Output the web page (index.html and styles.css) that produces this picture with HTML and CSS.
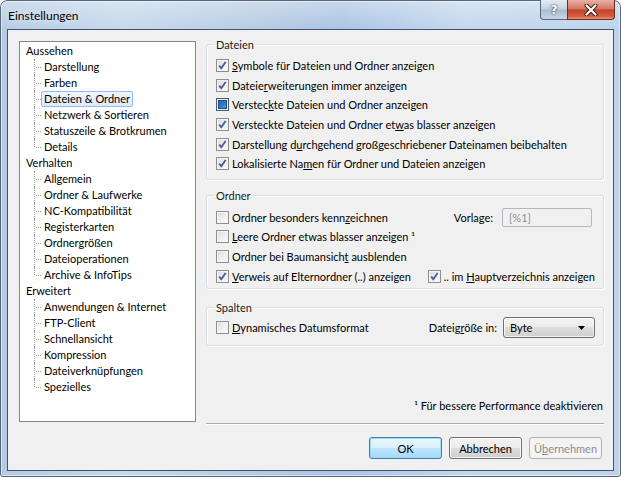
FILE: index.html
```html
<!DOCTYPE html>
<html>
<head>
  <title>Einstellungen</title>
  <link rel="stylesheet" href="styles.css">
</head>
<body>
  <div class="window">
    <div class="titlebar">
      <span class="title">Einstellungen</span>
      <div class="caption-buttons">
        <div class="cap help">?</div>
        <div class="cap close">
          <svg width="14" height="12" viewBox="0 0 14 12">
            <path d="M2.5 1.5 L11.5 10.5 M11.5 1.5 L2.5 10.5" stroke="#3a1a12" stroke-width="4" stroke-linecap="round"/>
            <path d="M2.5 1.5 L11.5 10.5 M11.5 1.5 L2.5 10.5" stroke="#fff" stroke-width="2.2" stroke-linecap="round"/>
          </svg>
        </div>
      </div>
    </div>

    <div class="client">
      <div class="main">
        <ul class="tree">
          <li><div class="node">Aussehen</div>
            <ul class="children">
              <li><span class="label">Darstellung</span></li>
              <li><span class="label">Farben</span></li>
              <li><span class="label selected">Dateien &amp; Ordner</span></li>
              <li><span class="label">Netzwerk &amp; Sortieren</span></li>
              <li><span class="label">Statuszeile &amp; Brotkrumen</span></li>
              <li><span class="label">Details</span></li>
            </ul>
          </li>
          <li><div class="node">Verhalten</div>
            <ul class="children">
              <li><span class="label">Allgemein</span></li>
              <li><span class="label">Ordner &amp; Laufwerke</span></li>
              <li><span class="label">NC-Kompatibilität</span></li>
              <li><span class="label">Registerkarten</span></li>
              <li><span class="label">Ordnergrößen</span></li>
              <li><span class="label">Dateioperationen</span></li>
              <li><span class="label">Archive &amp; InfoTips</span></li>
            </ul>
          </li>
          <li><div class="node">Erweitert</div>
            <ul class="children">
              <li><span class="label">Anwendungen &amp; Internet</span></li>
              <li><span class="label">FTP-Client</span></li>
              <li><span class="label">Schnellansicht</span></li>
              <li><span class="label">Kompression</span></li>
              <li><span class="label">Dateiverknüpfungen</span></li>
              <li><span class="label">Spezielles</span></li>
            </ul>
          </li>
        </ul>

        <div class="settings">
          <fieldset class="group group-files">
            <legend>Dateien</legend>
            <div class="row"><span class="cb checked"></span><span><u>S</u>ymbole für Dateien und Ordner anzeigen</span></div>
            <div class="row"><span class="cb checked"></span><span>Dateie<u>r</u>weiterungen immer anzeigen</span></div>
            <div class="row"><span class="cb mixed"></span><span>Verstec<u>k</u>te Dateien und Ordner anzeigen</span></div>
            <div class="row"><span class="cb checked"></span><span>Versteckte Dateien und Ordner et<u>w</u>as blasser anzeigen</span></div>
            <div class="row"><span class="cb checked"></span><span>Darstellung d<u>u</u>rchgehend großgeschriebener Dateinamen beibehalten</span></div>
            <div class="row"><span class="cb checked"></span><span>Lokalisierte Na<u>m</u>en für Ordner und Dateien anzeigen</span></div>
          </fieldset>

          <fieldset class="group group-folders">
            <legend>Ordner</legend>
            <div class="row">
              <span class="cb"></span><span>Ordner besonders kenn<u>z</u>eichnen</span>
              <span class="field"><span>Vorla<u>g</u>e:</span><span class="textbox">[%1]</span></span>
            </div>
            <div class="row"><span class="cb"></span><span><u>L</u>eere Ordner etwas blasser anzeigen ¹</span></div>
            <div class="row"><span class="cb"></span><span>Ordner bei Baumansich<u>t</u> ausblenden</span></div>
            <div class="row">
              <span class="cb checked"></span><span><u>V</u>erweis auf Elternordner (..) anzeigen</span>
              <span class="field"><span class="cb checked"></span><span>.. im <u>H</u>auptverzeichnis anzeigen</span></span>
            </div>
          </fieldset>

          <fieldset class="group group-columns">
            <legend>Spalten</legend>
            <div class="row">
              <span class="cb"></span><span><u>D</u>ynamisches Datumsformat</span>
              <span class="field"><span>Dateig<u>r</u>öße in:</span><span class="combo">Byte<svg width="7" height="4" viewBox="0 0 7 4"><path d="M0 0 H7 L3.5 4 Z" fill="#000"/></svg></span></span>
            </div>
          </fieldset>

          <p class="footnote">¹ Für bessere Performance deaktivieren</p>
        </div>
      </div>

      <div class="buttons">
        <button class="btn default">OK</button>
        <button class="btn">Abbrechen</button>
        <button class="btn" disabled>Ü<u>b</u>ernehmen</button>
      </div>
    </div>
  </div>
</body>
</html>
```

FILE: styles.css
```css
html, body {
  margin: 0;
  padding: 0;
}
body {
  font-family: Lato, "Open Sans", sans-serif;
  font-size: 11px;
  color: #000;
}
.window {
  width: 621px;
  height: 477px;
  box-sizing: border-box;
  padding: 0 7px 6px 7px;
  display: flex;
  flex-direction: column;
  border-radius: 7px 7px 3px 3px;
  background:
    linear-gradient(to bottom, rgba(255,255,255,0.35), rgba(255,255,255,0) 30px),
    linear-gradient(to right, #b5cbe3 0%, #c6d8ec 20%, #b3c9e1 45%, #a9c4e4 55%, #c4d7ec 75%, #bed3ea 100%);
  box-shadow: inset 0 0 0 1px #56677c, inset 0 0 0 2px rgba(255,255,255,0.5);
  overflow: hidden;
}

/* title bar */
.titlebar {
  height: 29px;
  display: flex;
  justify-content: space-between;
  align-items: flex-start;
}
.title {
  margin: 8px 0 0 1px;
  font-size: 12px;
  line-height: 15px;
  text-shadow: 0 0 6px rgba(255,255,255,0.9);
}
.caption-buttons {
  display: flex;
  margin-right: -1px;
}
.cap {
  height: 19px;
  display: flex;
  align-items: center;
  justify-content: center;
  border: 1px solid #56677c;
  border-top: none;
}
.help {
  width: 26px;
  border-right: none;
  border-radius: 0 0 0 4px;
  background: linear-gradient(to bottom, #e3ebf4 0%, #c3d2e3 48%, #a8bbd1 52%, #c8d7e8 100%);
  color: #fff;
  font-family: "DejaVu Sans", sans-serif;
  font-weight: bold;
  font-size: 13px;
  text-shadow: 0 0 2px #2c3a4c, 0 0 1px #2c3a4c;
}
.close {
  width: 46px;
  border-radius: 0 0 4px 0;
  border-color: #6b2a1c;
  background: linear-gradient(to bottom, #eab0a3 0%, #d77a67 45%, #c2452d 52%, #d45a3d 85%, #e59a7c 100%);
}

/* client area */
.client {
  flex: 1;
  border: 1px solid #3d5573;
  background: #f0f0f0;
  padding: 7px 9px 0 11px;
  display: flex;
  flex-direction: column;
}
.main {
  display: flex;
  gap: 10px;
  height: 387px;
}

/* tree */
.tree {
  list-style: none;
  margin: 4px 0 0 0;
  padding: 1px 0 0 0;
  width: 177px;
  height: 381px;
  box-sizing: border-box;
  background: #fff;
  border: 1px solid #828790;
}
.tree ul {
  list-style: none;
  margin: 0;
  padding: 0;
}
.node {
  line-height: 16px;
  height: 16px;
  padding-left: 6px;
}
.children li {
  position: relative;
  height: 16px;
  padding-left: 21px;
}
.children li::before {
  content: "";
  position: absolute;
  left: 14px;
  top: 0;
  bottom: 0;
  border-left: 1px dotted #a0a0a0;
}
.children li:last-child::before {
  bottom: 8px;
}
.children li::after {
  content: "";
  position: absolute;
  left: 16px;
  top: 8px;
  width: 5px;
  border-top: 1px dotted #a0a0a0;
}
.label {
  display: inline-block;
  line-height: 14px;
  padding: 0 2px;
  border: 1px solid transparent;
  border-radius: 2px;
}
.label.selected {
  border-color: #94bde9;
  background: linear-gradient(to bottom, #f1f7fe, #dde9f8);
}

/* settings column */
.settings {
  width: 398px;
  display: flex;
  flex-direction: column;
  border-bottom: 1px solid #a9acb0;
  box-shadow: 0 1px 0 #fff;
}
.group {
  margin: 0;
  padding: 4px 8px 5px 9px;
  border: 1px solid #d5dfe5;
  border-radius: 3px;
  box-shadow: inset 1px 1px 0 #fff, 1px 1px 0 #fff;
}
.group legend {
  padding: 0 2px;
  margin-left: -2px;
  line-height: 15px;
  color: #1b1b1b;
}
.group-folders {
  margin-top: 8px;
  padding-top: 5px;
  padding-bottom: 2px;
}
.group-columns {
  margin-top: 11px;
  padding-top: 3px;
  padding-bottom: 7px;
}
.row {
  display: flex;
  align-items: center;
  height: 19.6px;
  white-space: nowrap;
}
.field {
  margin-left: auto;
  display: flex;
  align-items: center;
}

/* checkboxes */
.cb {
  width: 13px;
  height: 13px;
  box-sizing: border-box;
  flex: none;
  margin-right: 3px;
  border: 1px solid #8e8f8f;
  background: linear-gradient(135deg, #d9dadb 0%, #eeeeee 50%, #fbfbfb 100%);
  box-shadow: inset 0 0 0 1px #f4f4f4;
}
.cb.checked {
  background:
    url("data:image/svg+xml,%3Csvg xmlns='http://www.w3.org/2000/svg' width='11' height='11'%3E%3Cpath d='M2.2 5.6 L4.3 8.2 L8.6 2' fill='none' stroke='%234b5f95' stroke-width='1.9'/%3E%3C/svg%3E") center / 11px 11px no-repeat,
    linear-gradient(135deg, #d9dadb 0%, #eeeeee 50%, #fbfbfb 100%);
}
.cb.mixed {
  border-color: #4c5c70;
  box-shadow: inset 0 0 0 1px #e8eef4, inset 0 0 0 2px #1f4f86;
  background: linear-gradient(135deg, #1c5d9e 0%, #2f7fc4 55%, #56a9e6 100%);
}

/* text inputs */
.textbox {
  width: 90px;
  height: 19px;
  box-sizing: border-box;
  margin: 0 3px 0 9px;
  padding-left: 6px;
  line-height: 17px;
  border: 1px solid #b5b8bd;
  border-radius: 2px;
  color: #8d8d8d;
  background: #f0f0f0;
}
.combo {
  width: 92px;
  height: 21px;
  box-sizing: border-box;
  margin-left: 6px;
  padding: 0 9px 0 6px;
  display: flex;
  align-items: center;
  justify-content: space-between;
  border: 1px solid #707070;
  border-radius: 3px;
  background: linear-gradient(to bottom, #f2f2f2 0%, #ebebeb 50%, #dddddd 50%, #cfcfcf 100%);
  box-shadow: inset 0 0 0 1px rgba(255,255,255,0.7);
}

.footnote {
  margin: auto 1px 10px 0;
  text-align: right;
  line-height: 15px;
}

/* buttons */
.buttons {
  display: flex;
  justify-content: flex-end;
  gap: 7px;
  margin-top: 13px;
  padding-right: 2px;
}
.btn {
  width: 73px;
  height: 22px;
  padding: 0;
  font-family: inherit;
  font-size: 11px;
  color: #000;
  border: 1px solid #707070;
  border-radius: 3px;
  background: linear-gradient(to bottom, #f2f2f2 0%, #ebebeb 50%, #dddddd 50%, #cfcfcf 100%);
  box-shadow: inset 0 0 0 1px rgba(255,255,255,0.8);
}
.btn.default {
  border-color: #3c7fb1;
  background: linear-gradient(to bottom, #eaf6fd 0%, #d9f0fc 50%, #bee6fd 50%, #a7d9f5 100%);
  box-shadow: inset 0 0 0 1px #9fdcf8;
}
.btn:disabled {
  color: #8b8b8b;
  border-color: #adb2b5;
  background: #f4f4f4;
  box-shadow: none;
}
```
